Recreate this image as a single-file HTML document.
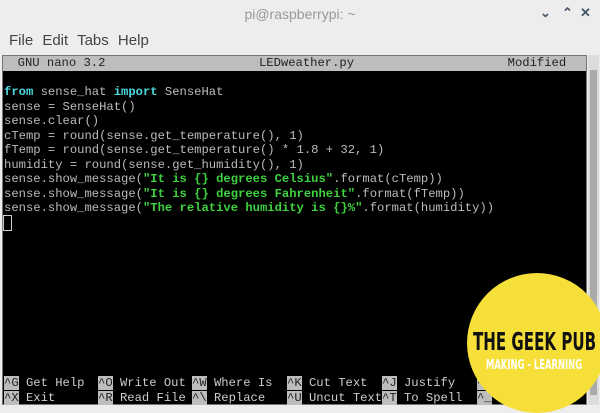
<!DOCTYPE html>
<html><head><style>
body{margin:0;width:600px;height:408px;background:#ededed;position:relative;overflow:hidden;font-family:"Liberation Sans",sans-serif}
.title{position:absolute;top:6px;left:0;width:600px;text-align:center;font-size:14px;color:#999}
.ctl{position:absolute;top:5px;font-size:13px;color:#456;font-weight:bold}
.menu{position:absolute;top:32px;left:9px;font-size:15px;color:#444;word-spacing:5px}
.term{position:absolute;left:2px;top:55px;width:585px;height:350px;background:#000;border:1px solid #777;box-sizing:border-box}
.mono{font-family:"Liberation Mono",monospace;font-size:12.2px;white-space:pre;position:absolute;left:1px;line-height:14.55px}
.hdr{position:absolute;left:0;top:0;width:583px;height:15px;background:#bdbdbd;color:#222}
.code{top:29px;color:#bbb}
.k{color:#4cd9e0;font-weight:bold}
.s{color:#3fd13f;font-weight:bold}
.sc{color:#ccc}
.g{background:#bdbdbd;color:#222}
.sb{position:absolute;left:588px;top:55px;width:11px;height:350px;background:#dcdcdc}
.th{position:absolute;left:590px;top:70px;width:7px;height:325px;background:#aaa}
.logo{position:absolute;left:467px;top:273px;width:140px;height:140px;border-radius:50%;background:#f6df38}
.lt{position:absolute;left:473px;top:327px;font-family:"DejaVu Sans Condensed","Liberation Sans Narrow",sans-serif;font-weight:bold;font-size:25px;color:#111;transform:scaleX(.67);transform-origin:left;white-space:nowrap}
.ls{position:absolute;left:486px;top:358px;font-family:"DejaVu Sans Condensed",sans-serif;font-weight:bold;font-size:13px;color:#fff;transform:scaleX(.72);transform-origin:left;white-space:nowrap}
</style></head><body>
<div class="title">pi@raspberrypi: ~</div>
<div class="ctl" style="left:540px">⌄</div><div class="ctl" style="left:562px">⌃</div><div class="ctl" style="left:580px">✕</div>
<div class="menu">File Edit Tabs Help</div>
<div class="term">
<div class="mono hdr">  GNU nano 3.2                     LEDweather.py                     Modified</div>
<div class="mono code"><span class="k">from</span> sense_hat <span class="k">import</span> SenseHat
sense = SenseHat()
sense.clear()
cTemp = round(sense.get_temperature(), 1)
fTemp = round(sense.get_temperature() * 1.8 + 32, 1)
humidity = round(sense.get_humidity(), 1)
sense.show_message(<span class="s">"It is {} degrees Celsius"</span>.format(cTemp))
sense.show_message(<span class="s">"It is {} degrees Fahrenheit"</span>.format(fTemp))
sense.show_message(<span class="s">"The relative humidity is {}%"</span>.format(humidity))
<span style="outline:1px solid #ccc"> </span></div>
<div class="mono sc" style="left:1px;top:320px"><span class="g">^G</span> Get Help
<span class="g">^X</span> Exit</div>
<div class="mono sc" style="left:95px;top:320px"><span class="g">^O</span> Write Out
<span class="g">^R</span> Read File</div>
<div class="mono sc" style="left:189px;top:320px"><span class="g">^W</span> Where Is
<span class="g">^\</span> Replace</div>
<div class="mono sc" style="left:284px;top:320px"><span class="g">^K</span> Cut Text
<span class="g">^U</span> Uncut Text</div>
<div class="mono sc" style="left:379px;top:320px"><span class="g">^J</span> Justify
<span class="g">^T</span> To Spell</div>
<div class="mono sc" style="left:474px;top:320px"><span class="g">^C</span>
<span class="g">^_</span></div>
</div>
<div class="sb"></div><div class="th"></div>
<div class="logo"></div>
<div class="lt">THE GEEK PUB</div>
<div class="ls">MAKING - LEARNING</div>
</body></html>
